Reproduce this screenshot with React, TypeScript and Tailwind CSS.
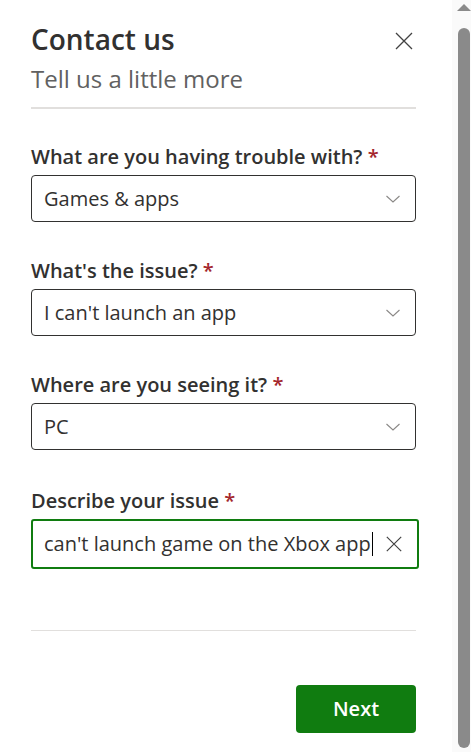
import React from "react";

const font = { fontFamily: '"Open Sans", "Noto Sans", sans-serif' };

function Chevron() {
  return (
    <svg width="16" height="16" viewBox="0 0 16 16" fill="none" className="text-[#8a8886]">
      <path d="M1.5 5 L8 11 L14.5 5" stroke="currentColor" strokeWidth="1.1" />
    </svg>
  );
}

function CloseIcon({ size }: { size: number }) {
  return (
    <svg width={size} height={size} viewBox="0 0 20 20" fill="none">
      <path d="M2 2 L18 18 M18 2 L2 18" stroke="#424242" strokeWidth="1.3" />
    </svg>
  );
}

function Label({ text }: { text: string }) {
  return (
    <div className="text-[20px] leading-[26px] font-semibold text-[#323130]">
      {text} <span className="text-[#a4262c]">*</span>
    </div>
  );
}

function Select({ label, value }: { label: string; value: string }) {
  return (
    <div className="flex flex-col gap-[5px]">
      <Label text={label} />
      <div className="flex h-[47px] items-center justify-between rounded-[4px] border border-[#323130] pl-[12px] pr-[14px]">
        <span className="text-[20px] text-[#323130]">{value}</span>
        <Chevron />
      </div>
    </div>
  );
}

export default function App() {
  return (
    <div className="flex h-[752px] w-[471px] overflow-hidden bg-white" style={font}>
      <div className="flex flex-1 flex-col pl-[31px] pr-[36px] pt-[21px]">
        <div className="flex items-start justify-between">
          <h1 className="text-[28px] leading-[36px] font-semibold text-[#323130]">Contact us</h1>
          <div className="mt-[10px] mr-[2px]">
            <CloseIcon size={20} />
          </div>
        </div>
        <div className="mt-[5px] text-[24px] leading-[34px] font-normal text-[#616161]">Tell us a little more</div>
        <div className="mt-[11px] h-[2px] bg-[#e1dfdd]" />

        <div className="mt-[35px] flex flex-col gap-[36px]">
          <Select label="What are you having trouble with?" value="Games & apps" />
          <Select label="What's the issue?" value="I can't launch an app" />
          <Select label="Where are you seeing it?" value="PC" />
          <div className="mt-[2px] flex flex-col gap-[5px]">
            <Label text="Describe your issue" />
            <div className="-mr-[3px] flex h-[50px] items-center justify-between rounded-[3px] border-2 border-[#107c10] pl-[11px] pr-[14px]">
              <span className="flex items-center whitespace-nowrap text-[20px] text-[#323130]">
                can't launch game on the Xbox app
                <span className="ml-[1px] inline-block h-[24px] w-[1px] bg-[#000]" />
              </span>
              <CloseIcon size={18} />
            </div>
          </div>
        </div>

        <div className="mt-[61px] h-[1px] bg-[#e1dfdd]" />

        <div className="mt-[54px] flex justify-end">
          <button className="h-[48px] w-[120px] rounded-[4px] bg-[#107c10] text-[20px] font-semibold text-white">
            Next
          </button>
        </div>
      </div>

      <div className="flex w-[19px] flex-col items-center bg-[#fafafa] pt-[4px] pl-[4px]">
        <svg width="14" height="8" viewBox="0 0 14 8">
          <path d="M7 0 L14 7 L0 7 Z" fill="#8a8a8a" />
        </svg>
        <div className="mt-[16px] h-[720px] w-[12px] rounded-full bg-[#8a8a8a]" />
      </div>
    </div>
  );
}
